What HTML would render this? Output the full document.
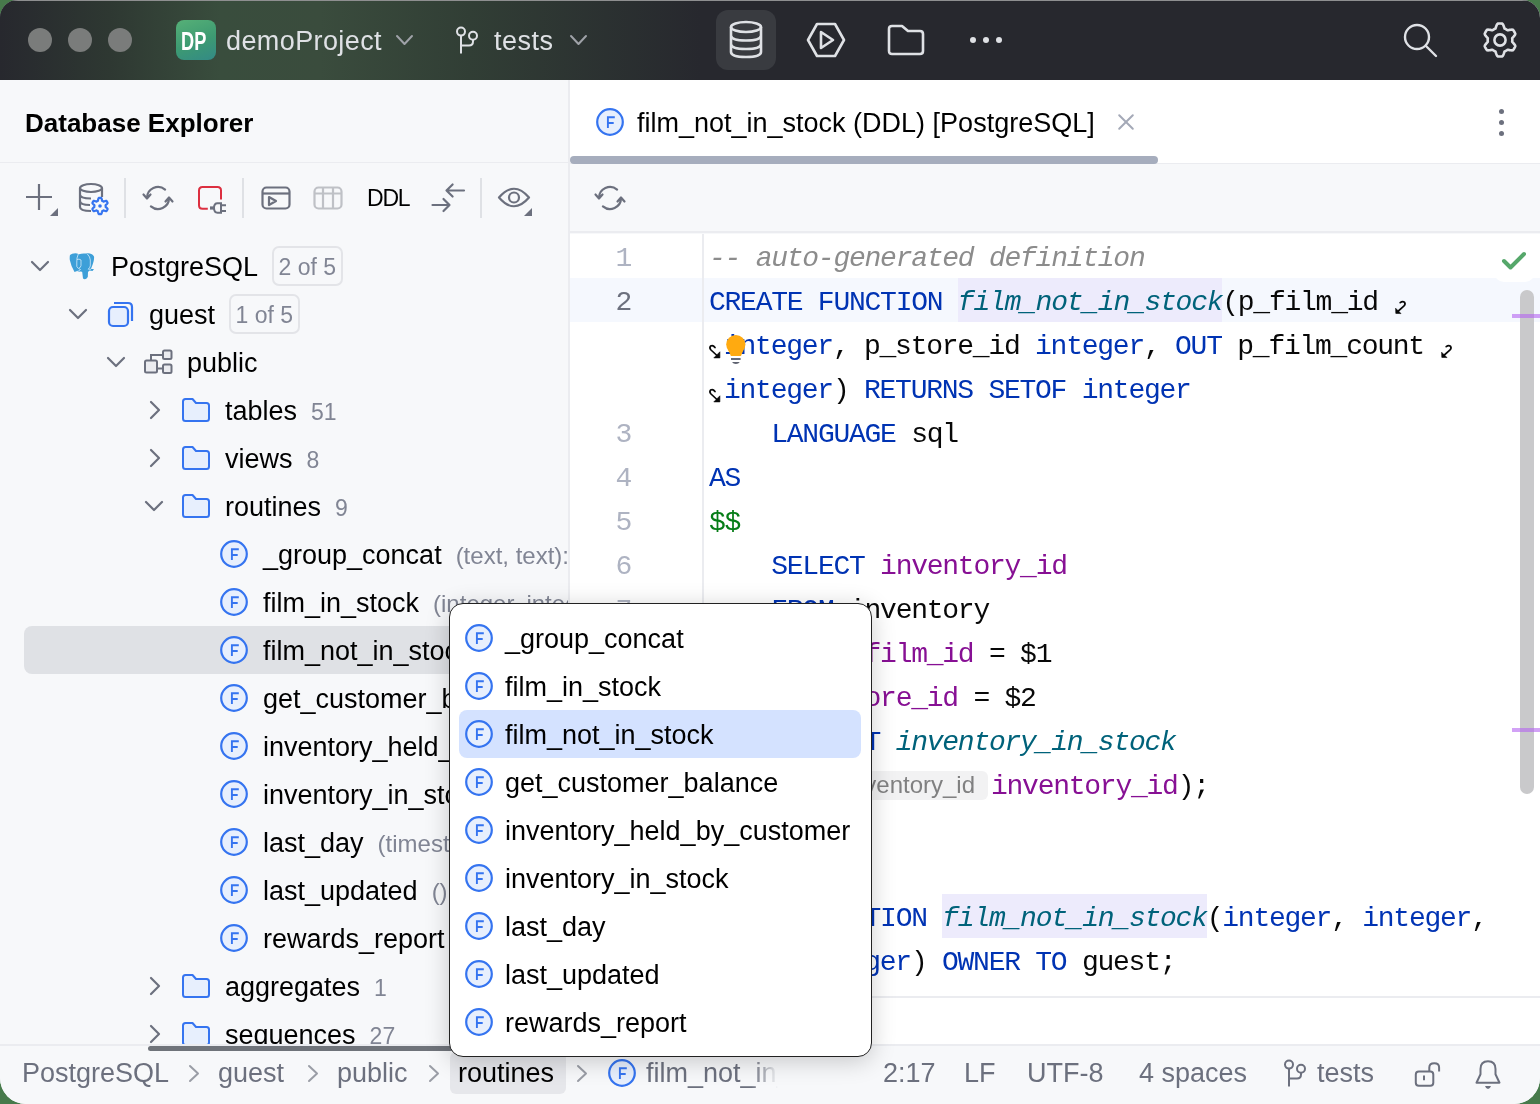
<!DOCTYPE html>
<html><head><meta charset="utf-8">
<style>
*{margin:0;padding:0;box-sizing:border-box}
html,body{width:1540px;height:1104px;overflow:hidden;background:#477a4b}
body{position:relative;font-family:"Liberation Sans",sans-serif;color:#000}
.win{will-change:transform;position:absolute;left:0;top:0;width:1540px;height:1104px;border-radius:18px 18px 26px 26px;overflow:hidden;background:#f7f8fa}
.t{position:absolute;white-space:pre}
svg{position:absolute;overflow:visible}
.cl{position:absolute;left:709px;font-family:"Liberation Mono",monospace;font-size:28px;letter-spacing:-1.25px;white-space:pre;line-height:44px;height:44px;color:#080808}
.kw{color:#0033b3}.fn{color:#00627a;font-style:italic}.id{color:#871094}.cm{color:#8c8c8c;font-style:italic}.gr{color:#067d17}
.hl{background:#ede9fa}
</style></head>
<body>
<div class="win">

<div style="position:absolute;left:0;top:0;width:1540px;height:80px;background:#27282e"></div>
<div style="position:absolute;left:0;top:0;width:760px;height:80px;background:linear-gradient(90deg,#27282e 0px,#2e3832 110px,#394d3d 220px,#3a4c3d 320px,#313e35 470px,#27282e 700px)"></div>
<div style="position:absolute;left:0;top:0;width:1540px;height:1px;background:#8e8f90"></div>
<div style="position:absolute;left:28px;top:28px;width:24px;height:24px;border-radius:50%;background:#7a7c7b"></div>
<div style="position:absolute;left:68px;top:28px;width:24px;height:24px;border-radius:50%;background:#7a7c7b"></div>
<div style="position:absolute;left:108px;top:28px;width:24px;height:24px;border-radius:50%;background:#7a7c7b"></div>
<div style="position:absolute;left:176px;top:20px;width:40px;height:40px;border-radius:8px;background:linear-gradient(160deg,#56b077 0%,#3d9a72 55%,#338a86 100%)"></div>
<div class="t" style="left:180.5px;top:25.9px;font-size:26px;line-height:31px;height:31px;color:#fff;font-weight:bold;transform:scaleX(0.7);transform-origin:0 0;">DP</div>
<div class="t" style="left:226px;top:25.1px;font-size:27px;line-height:32px;height:32px;color:#dfe1e5;font-weight:normal;letter-spacing:0.4px;">demoProject</div>
<svg style="left:394.5px;top:34.0px;" width="19" height="12" viewBox="0 0 19 12"><path d="M2 2 L9.5 10 L17 2" fill="none" stroke="#9fa2a8" stroke-width="2" stroke-linecap="round" stroke-linejoin="round"/></svg>
<svg style="left:454px;top:26px;" width="26" height="30" viewBox="0 0 26 30"><g fill="none" stroke="#dfe1e5" stroke-width="2"><circle cx="7" cy="5.6" r="4"/><circle cx="19" cy="9.8" r="4"/><path d="M7 9.6 L7 27.5 M19 13.8 L19 15.5 Q19 19.5 15 19.5 L7 19.5"/></g></svg>
<div class="t" style="left:494px;top:25.1px;font-size:27px;line-height:32px;height:32px;color:#dfe1e5;font-weight:normal;letter-spacing:0.5px;">tests</div>
<svg style="left:568.5px;top:34.0px;" width="19" height="12" viewBox="0 0 19 12"><path d="M2 2 L9.5 10 L17 2" fill="none" stroke="#9fa2a8" stroke-width="2" stroke-linecap="round" stroke-linejoin="round"/></svg>
<div style="position:absolute;left:716px;top:10px;width:60px;height:60px;border-radius:12px;background:#393b40"></div>
<svg style="left:729px;top:21px;" width="34" height="38" viewBox="0 0 34 38"><g fill="none" stroke="#dfe1e5" stroke-width="2.6"><ellipse cx="17" cy="6" rx="15" ry="5"/><path d="M2 6 L2 31 Q2 36 17 36 Q32 36 32 31 L32 6 M2 14.5 Q2 19.5 17 19.5 Q32 19.5 32 14.5 M2 23 Q2 28 17 28 Q32 28 32 23"/></g></svg>
<svg style="left:806px;top:22px;" width="40" height="36" viewBox="0 0 40 36"><g fill="none" stroke="#dfe1e5" stroke-width="2.6" stroke-linejoin="round"><path d="M11 2 L29 2 L38 18 L29 34 L11 34 L2 18 Z"/><path d="M15 10 L27 18 L15 26 Z"/></g></svg>
<svg style="left:887px;top:24px;" width="38" height="32" viewBox="0 0 38 32"><path d="M2 5 Q2 2 5 2 L15 2 L21 7 L33 7 Q36 7 36 10 L36 27 Q36 30 33 30 L5 30 Q2 30 2 27 Z" fill="none" stroke="#dfe1e5" stroke-width="2.6" stroke-linejoin="round"/></svg>
<div style="position:absolute;left:970px;top:37px;width:6px;height:6px;border-radius:50%;background:#dfe1e5"></div>
<div style="position:absolute;left:983px;top:37px;width:6px;height:6px;border-radius:50%;background:#dfe1e5"></div>
<div style="position:absolute;left:996px;top:37px;width:6px;height:6px;border-radius:50%;background:#dfe1e5"></div>
<svg style="left:1402px;top:22px;" width="38" height="38" viewBox="0 0 38 38"><g fill="none" stroke="#dfe1e5" stroke-width="2.4" stroke-linecap="round"><circle cx="15" cy="15" r="12"/><path d="M24 24 L34 34"/></g></svg>
<svg style="left:1481px;top:21px;" width="38" height="38" viewBox="0 0 38 38"><g fill="none" stroke="#dfe1e5" stroke-width="2.6" stroke-linejoin="round"><path d="M19.00 2.50 L19.58 2.51 L20.15 2.54 L20.72 2.59 L21.30 2.66 L21.79 3.16 L22.21 3.90 L22.57 4.69 L22.87 5.50 L23.13 6.29 L23.35 7.05 L23.61 7.60 L24.00 7.76 L24.39 7.94 L24.77 8.14 L25.15 8.35 L25.52 8.57 L25.88 8.80 L26.23 9.05 L26.57 9.31 L27.18 9.26 L27.94 9.07 L28.76 8.89 L29.61 8.75 L30.47 8.67 L31.32 8.66 L32.00 8.84 L32.35 9.30 L32.68 9.77 L32.99 10.26 L33.29 10.75 L33.57 11.25 L33.83 11.77 L34.07 12.29 L34.30 12.82 L34.11 13.50 L33.68 14.23 L33.18 14.93 L32.63 15.60 L32.07 16.22 L31.53 16.79 L31.18 17.29 L31.23 17.71 L31.27 18.14 L31.29 18.57 L31.30 19.00 L31.29 19.43 L31.27 19.86 L31.23 20.29 L31.18 20.71 L31.53 21.21 L32.07 21.78 L32.63 22.40 L33.18 23.07 L33.68 23.77 L34.11 24.50 L34.30 25.18 L34.07 25.71 L33.83 26.23 L33.57 26.75 L33.29 27.25 L32.99 27.74 L32.68 28.23 L32.35 28.70 L32.00 29.16 L31.32 29.34 L30.47 29.33 L29.61 29.25 L28.76 29.11 L27.94 28.93 L27.18 28.74 L26.57 28.69 L26.23 28.95 L25.88 29.20 L25.52 29.43 L25.15 29.65 L24.77 29.86 L24.39 30.06 L24.00 30.24 L23.61 30.40 L23.35 30.95 L23.13 31.71 L22.87 32.50 L22.57 33.31 L22.21 34.10 L21.79 34.84 L21.30 35.34 L20.72 35.41 L20.15 35.46 L19.58 35.49 L19.00 35.50 L18.42 35.49 L17.85 35.46 L17.28 35.41 L16.70 35.34 L16.21 34.84 L15.79 34.10 L15.43 33.31 L15.13 32.50 L14.87 31.71 L14.65 30.95 L14.39 30.40 L14.00 30.24 L13.61 30.06 L13.23 29.86 L12.85 29.65 L12.48 29.43 L12.12 29.20 L11.77 28.95 L11.43 28.69 L10.82 28.74 L10.06 28.93 L9.24 29.11 L8.39 29.25 L7.53 29.33 L6.68 29.34 L6.00 29.16 L5.65 28.70 L5.32 28.23 L5.01 27.74 L4.71 27.25 L4.43 26.75 L4.17 26.23 L3.93 25.71 L3.70 25.18 L3.89 24.50 L4.32 23.77 L4.82 23.07 L5.37 22.40 L5.93 21.78 L6.47 21.21 L6.82 20.71 L6.77 20.29 L6.73 19.86 L6.71 19.43 L6.70 19.00 L6.71 18.57 L6.73 18.14 L6.77 17.71 L6.82 17.29 L6.47 16.79 L5.93 16.22 L5.37 15.60 L4.82 14.93 L4.32 14.23 L3.89 13.50 L3.70 12.82 L3.93 12.29 L4.17 11.77 L4.43 11.25 L4.71 10.75 L5.01 10.26 L5.32 9.77 L5.65 9.30 L6.00 8.84 L6.68 8.66 L7.53 8.67 L8.39 8.75 L9.24 8.89 L10.06 9.07 L10.82 9.26 L11.43 9.31 L11.77 9.05 L12.12 8.80 L12.48 8.57 L12.85 8.35 L13.23 8.14 L13.61 7.94 L14.00 7.76 L14.39 7.60 L14.65 7.05 L14.87 6.29 L15.13 5.50 L15.43 4.69 L15.79 3.90 L16.21 3.16 L16.70 2.66 L17.28 2.59 L17.85 2.54 L18.42 2.51 Z"/><circle cx="19" cy="19" r="5.6"/></g></svg>
<div class="t" style="left:25px;top:107.9px;font-size:26px;line-height:31px;height:31px;color:#000;font-weight:bold;">Database Explorer</div>
<div style="position:absolute;left:0;top:162px;width:570px;height:1px;background:#ebecf0"></div>
<svg style="left:24px;top:182px;" width="36" height="36" viewBox="0 0 36 36"><g stroke="#6c707e" stroke-width="2.2" fill="none"><path d="M15 2 L15 28 M2 15 L28 15"/></g><path d="M34 26 L34 34 L26 34 Z" fill="#6c707e"/></svg>
<svg style="left:78px;top:182px;" width="30" height="32" viewBox="0 0 30 32"><g fill="none" stroke="#6c707e" stroke-width="2.2"><ellipse cx="13" cy="6" rx="11" ry="4"/><path d="M2 6 L2 25 Q2 29 13 29 M24 6 L24 15 M2 12.5 Q2 16.5 13 16.5 M2 19 Q2 23 12 23"/></g></svg>
<svg style="left:0;top:0" width="1" height="1" viewBox="0 0 1 1"><path d="M100.00 197.80 L100.29 197.80 L100.57 197.82 L100.86 197.84 L101.14 197.88 L101.38 198.18 L101.57 198.62 L101.72 199.09 L101.84 199.58 L101.93 200.05 L102.00 200.49 L102.10 200.81 L102.28 200.88 L102.45 200.97 L102.63 201.06 L102.80 201.15 L102.97 201.25 L103.13 201.36 L103.29 201.47 L103.45 201.59 L103.77 201.51 L104.19 201.35 L104.64 201.19 L105.12 201.06 L105.61 200.95 L106.08 200.90 L106.46 200.95 L106.63 201.18 L106.80 201.41 L106.95 201.65 L107.10 201.90 L107.24 202.15 L107.37 202.41 L107.49 202.66 L107.60 202.93 L107.46 203.28 L107.17 203.67 L106.84 204.04 L106.48 204.38 L106.12 204.70 L105.77 204.98 L105.55 205.22 L105.57 205.41 L105.59 205.61 L105.60 205.80 L105.60 206.00 L105.60 206.20 L105.59 206.39 L105.57 206.59 L105.55 206.78 L105.77 207.02 L106.12 207.30 L106.48 207.62 L106.84 207.96 L107.17 208.33 L107.46 208.72 L107.60 209.07 L107.49 209.34 L107.37 209.59 L107.24 209.85 L107.10 210.10 L106.95 210.35 L106.80 210.59 L106.63 210.82 L106.46 211.05 L106.08 211.10 L105.61 211.05 L105.12 210.94 L104.64 210.81 L104.19 210.65 L103.77 210.49 L103.45 210.41 L103.29 210.53 L103.13 210.64 L102.97 210.75 L102.80 210.85 L102.63 210.94 L102.45 211.03 L102.28 211.12 L102.10 211.19 L102.00 211.51 L101.93 211.95 L101.84 212.42 L101.72 212.91 L101.57 213.38 L101.38 213.82 L101.14 214.12 L100.86 214.16 L100.57 214.18 L100.29 214.20 L100.00 214.20 L99.71 214.20 L99.43 214.18 L99.14 214.16 L98.86 214.12 L98.62 213.82 L98.43 213.38 L98.28 212.91 L98.16 212.42 L98.07 211.95 L98.00 211.51 L97.90 211.19 L97.72 211.12 L97.55 211.03 L97.37 210.94 L97.20 210.85 L97.03 210.75 L96.87 210.64 L96.71 210.53 L96.55 210.41 L96.23 210.49 L95.81 210.65 L95.36 210.81 L94.88 210.94 L94.39 211.05 L93.92 211.10 L93.54 211.05 L93.37 210.82 L93.20 210.59 L93.05 210.35 L92.90 210.10 L92.76 209.85 L92.63 209.59 L92.51 209.34 L92.40 209.07 L92.54 208.72 L92.83 208.33 L93.16 207.96 L93.52 207.62 L93.88 207.30 L94.23 207.02 L94.45 206.78 L94.43 206.59 L94.41 206.39 L94.40 206.20 L94.40 206.00 L94.40 205.80 L94.41 205.61 L94.43 205.41 L94.45 205.22 L94.23 204.98 L93.88 204.70 L93.52 204.38 L93.16 204.04 L92.83 203.67 L92.54 203.28 L92.40 202.93 L92.51 202.66 L92.63 202.41 L92.76 202.15 L92.90 201.90 L93.05 201.65 L93.20 201.41 L93.37 201.18 L93.54 200.95 L93.92 200.90 L94.39 200.95 L94.88 201.06 L95.36 201.19 L95.81 201.35 L96.23 201.51 L96.55 201.59 L96.71 201.47 L96.87 201.36 L97.03 201.25 L97.20 201.15 L97.37 201.06 L97.55 200.97 L97.72 200.88 L97.90 200.81 L98.00 200.49 L98.07 200.05 L98.16 199.58 L98.28 199.09 L98.43 198.62 L98.62 198.18 L98.86 197.88 L99.14 197.84 L99.43 197.82 L99.71 197.80 Z" fill="#f7f8fa" stroke="#3574f0" stroke-width="2.2" stroke-linejoin="round"/><circle cx="100" cy="206" r="1.8" fill="#3574f0"/></svg>
<div style="position:absolute;left:124px;top:178px;width:2px;height:40px;background:#dfe1e5"></div>
<div style="position:absolute;left:242px;top:178px;width:2px;height:40px;background:#dfe1e5"></div>
<div style="position:absolute;left:480px;top:178px;width:2px;height:40px;background:#dfe1e5"></div>
<svg style="left:142px;top:183px;" width="32" height="30" viewBox="0 0 32 30"><g fill="none" stroke="#6c707e" stroke-width="2.2" stroke-linecap="round" stroke-linejoin="round"><path d="M23.1 6.6 A11 11 0 0 0 5 15 M1.5 11.5 L5 15.5 L8.5 11.5"/><path d="M8.9 23.4 A11 11 0 0 0 27 15 M23.5 18.5 L27 14.5 L30.5 18.5"/></g></svg>
<svg style="left:197px;top:185px;" width="32" height="32" viewBox="0 0 32 32"><path d="M10.8 23.8 L5.5 23.8 Q2 23.8 2 20.3 L2 5.5 Q2 2 5.5 2 L20.5 2 Q24 2 24 5.5 L24 14.6" fill="none" stroke="#dc2f40" stroke-width="2"/><g fill="none" stroke="#6c707e" stroke-width="2"><path d="M24 18.3 L20.5 18.3 Q17 18.3 17 23 Q17 27.7 20.5 27.7 L24 27.7 Z"/><path d="M24 20.2 L29 20.2 M24 26 L29 26"/></g><rect x="13" y="21.4" width="4" height="3.2" fill="#6c707e"/></svg>
<svg style="left:261px;top:186px;" width="30" height="24" viewBox="0 0 30 24"><g fill="none" stroke="#6c707e" stroke-width="2.2"><rect x="1.5" y="1.5" width="27" height="21" rx="4"/><path d="M1.5 7.5 L28.5 7.5"/><path d="M8 11 L15 15 L8 19 Z" stroke-linejoin="round"/></g></svg>
<svg style="left:313px;top:186px;" width="30" height="24" viewBox="0 0 30 24"><g fill="none" stroke="#bfc1c6" stroke-width="2.2"><rect x="1.5" y="1.5" width="27" height="21" rx="4"/><path d="M1.5 7.5 L28.5 7.5 M10 1.5 L10 22.5 M20 1.5 L20 22.5"/></g></svg>
<div class="t" style="left:367px;top:184.4px;font-size:23px;line-height:28px;height:28px;color:#000;font-weight:normal;letter-spacing:-1.2px;">DDL</div>
<svg style="left:431px;top:183px;" width="36" height="30" viewBox="0 0 36 30"><g fill="none" stroke="#6c707e" stroke-width="2.2" stroke-linecap="round" stroke-linejoin="round"><path d="M33 7.5 L15.5 7.5 M21.6 1.5 L15.5 7.5 L21.6 13.5"/><path d="M1.5 22 L18.5 22 M12.5 16 L18.5 22 L12.5 28"/></g></svg>
<svg style="left:497px;top:186px;" width="40" height="32" viewBox="0 0 40 32"><g fill="none" stroke="#6c707e" stroke-width="2.2"><path d="M2 11.5 Q17 -6 32 11.5 Q17 29 2 11.5 Z" stroke-linejoin="round"/><circle cx="17" cy="11.5" r="5"/></g><path d="M35 22 L35 30 L27 30 Z" fill="#6c707e"/></svg>
<div style="position:absolute;left:0;top:0;width:568px;height:1044px;overflow:hidden">
<div style="position:absolute;left:24px;top:626px;width:560px;height:48px;border-radius:8px;background:#dfe1e5"></div>
<svg style="left:30.0px;top:260.0px;" width="20" height="12" viewBox="0 0 20 12"><path d="M2 2 L10.0 10 L18 2" fill="none" stroke="#6c707e" stroke-width="2.2" stroke-linecap="round" stroke-linejoin="round"/></svg>
<svg style="left:66px;top:250px;" width="32" height="32" viewBox="0 0 32 32"><path d="M4 5 Q6 3 11 3.4 L13 4.2 Q16 3.2 20 3.6 L21.5 3.2 Q26 3 28 6.5 Q28.6 10 25.5 17.5 L25 19 L28 19 L26.5 21 L23.5 20.5 L22 22 L21.8 27 Q19.5 30.5 17 28.5 L16.2 22 L15 21.5 L11.5 21.8 L12.5 20.5 L8.5 22 Q5 16 3.8 10 Q3.5 7 4 5 Z" fill="#3d9fd8"/><g fill="none" stroke="#d6ebf9" stroke-width="0.8"><path d="M12.3 4 Q10.5 8 10.8 12 L10.8 16.5 Q12 18.8 14.5 19.5 L12 21.5 M21.2 3.8 Q24.3 7 24.3 10 L24.3 16 Q23.6 18 22.2 19.2 L25 19.3 M11 9.5 Q13 8.5 15 10 L15 15.5 Q14.5 18 13 18"/></g></svg>
<div class="t" style="left:111px;top:251.1px;font-size:27px;line-height:32px;height:32px;color:#000;font-weight:normal;">PostgreSQL</div>
<div style="position:absolute;left:272.1px;top:246px;width:70.6px;height:40px;border:2px solid #e3e4e8;border-radius:7px"></div>
<div class="t" style="left:278.578125px;top:253.4px;font-size:23px;line-height:28px;height:28px;color:#818594;font-weight:normal;">2 of 5</div>
<svg style="left:68.0px;top:308.0px;" width="20" height="12" viewBox="0 0 20 12"><path d="M2 2 L10.0 10 L18 2" fill="none" stroke="#6c707e" stroke-width="2.2" stroke-linecap="round" stroke-linejoin="round"/></svg>
<svg style="left:106px;top:300px;" width="30" height="30" viewBox="0 0 30 30"><path d="M8 3 L22 3 Q26 3 26 7 L26 21" fill="none" stroke="#3574f0" stroke-width="2.2"/><rect x="3" y="7" width="19" height="19" rx="4" fill="#e7effd" stroke="#3574f0" stroke-width="2.2"/></svg>
<div class="t" style="left:149px;top:299.1px;font-size:27px;line-height:32px;height:32px;color:#000;font-weight:normal;">guest</div>
<div style="position:absolute;left:229.0px;top:294px;width:70.6px;height:40px;border:2px solid #e3e4e8;border-radius:7px"></div>
<div class="t" style="left:235.546875px;top:301.4px;font-size:23px;line-height:28px;height:28px;color:#818594;font-weight:normal;">1 of 5</div>
<svg style="left:106.0px;top:356.0px;" width="20" height="12" viewBox="0 0 20 12"><path d="M2 2 L10.0 10 L18 2" fill="none" stroke="#6c707e" stroke-width="2.2" stroke-linecap="round" stroke-linejoin="round"/></svg>
<svg style="left:142px;top:348px;" width="32" height="28" viewBox="0 0 32 28"><g stroke="#6c707e" stroke-width="2" fill="#ebecf0"><path d="M9 12 L9 7 L21 7 M15 20.5 L21 20.5" fill="none"/><rect x="3" y="12.5" width="12" height="12" rx="1.5"/><rect x="21" y="2.5" width="8.5" height="8.5" rx="1.5"/><rect x="21" y="16.5" width="8.5" height="8.5" rx="1.5"/></g></svg>
<div class="t" style="left:187px;top:347.1px;font-size:27px;line-height:32px;height:32px;color:#000;font-weight:normal;">public</div>
<svg style="left:148.5px;top:400.0px;" width="12" height="20" viewBox="0 0 12 20"><path d="M2 2 L10 10.0 L2 18" fill="none" stroke="#6c707e" stroke-width="2.2" stroke-linecap="round" stroke-linejoin="round"/></svg>
<svg style="left:182px;top:398px;" width="28" height="24" viewBox="0 0 28 24"><path d="M1 3.5 Q1 1 3.5 1 L10.5 1 L14 5 L24.5 5 Q27 5 27 7.5 L27 20.5 Q27 23 24.5 23 L3.5 23 Q1 23 1 20.5 Z" fill="#e7effd" stroke="#3574f0" stroke-width="2" stroke-linejoin="round"/></svg>
<div class="t" style="left:225px;top:395.1px;font-size:27px;line-height:32px;height:32px;color:#000;font-weight:normal;">tables</div>
<div class="t" style="left:311.046875px;top:398.4px;font-size:23px;line-height:28px;height:28px;color:#818594;font-weight:normal;">51</div>
<svg style="left:148.5px;top:448.0px;" width="12" height="20" viewBox="0 0 12 20"><path d="M2 2 L10 10.0 L2 18" fill="none" stroke="#6c707e" stroke-width="2.2" stroke-linecap="round" stroke-linejoin="round"/></svg>
<svg style="left:182px;top:446px;" width="28" height="24" viewBox="0 0 28 24"><path d="M1 3.5 Q1 1 3.5 1 L10.5 1 L14 5 L24.5 5 Q27 5 27 7.5 L27 20.5 Q27 23 24.5 23 L3.5 23 Q1 23 1 20.5 Z" fill="#e7effd" stroke="#3574f0" stroke-width="2" stroke-linejoin="round"/></svg>
<div class="t" style="left:225px;top:443.1px;font-size:27px;line-height:32px;height:32px;color:#000;font-weight:normal;">views</div>
<div class="t" style="left:306.515625px;top:446.4px;font-size:23px;line-height:28px;height:28px;color:#818594;font-weight:normal;">8</div>
<svg style="left:144.0px;top:500.0px;" width="20" height="12" viewBox="0 0 20 12"><path d="M2 2 L10.0 10 L18 2" fill="none" stroke="#6c707e" stroke-width="2.2" stroke-linecap="round" stroke-linejoin="round"/></svg>
<svg style="left:182px;top:494px;" width="28" height="24" viewBox="0 0 28 24"><path d="M1 3.5 Q1 1 3.5 1 L10.5 1 L14 5 L24.5 5 Q27 5 27 7.5 L27 20.5 Q27 23 24.5 23 L3.5 23 Q1 23 1 20.5 Z" fill="#e7effd" stroke="#3574f0" stroke-width="2" stroke-linejoin="round"/></svg>
<div class="t" style="left:225px;top:491.1px;font-size:27px;line-height:32px;height:32px;color:#000;font-weight:normal;">routines</div>
<div class="t" style="left:335.046875px;top:494.4px;font-size:23px;line-height:28px;height:28px;color:#818594;font-weight:normal;">9</div>
<svg style="left:220px;top:540px;" width="28" height="28" viewBox="0 0 28 28"><circle cx="14" cy="14" r="12.8" fill="#e7effd" stroke="#3574f0" stroke-width="2.2"/><path d="M11.9 20 L11.9 9.2 L18.8 9.2 M11.9 15 L17.7 15" fill="none" stroke="#3574f0" stroke-width="1.9"/></svg>
<div class="t" style="left:263px;top:539.1px;font-size:27px;line-height:32px;height:32px;color:#000;font-weight:normal;">_group_concat</div>
<div class="t" style="left:455.625px;top:540.6px;font-size:24px;line-height:29px;height:29px;color:#818594;font-weight:normal;">(text, text): text</div>
<svg style="left:220px;top:588px;" width="28" height="28" viewBox="0 0 28 28"><circle cx="14" cy="14" r="12.8" fill="#e7effd" stroke="#3574f0" stroke-width="2.2"/><path d="M11.9 20 L11.9 9.2 L18.8 9.2 M11.9 15 L17.7 15" fill="none" stroke="#3574f0" stroke-width="1.9"/></svg>
<div class="t" style="left:263px;top:587.1px;font-size:27px;line-height:32px;height:32px;color:#000;font-weight:normal;">film_in_stock</div>
<div class="t" style="left:433.046875px;top:588.6px;font-size:24px;line-height:29px;height:29px;color:#818594;font-weight:normal;">(integer, integer): integer</div>
<svg style="left:220px;top:636px;" width="28" height="28" viewBox="0 0 28 28"><circle cx="14" cy="14" r="12.8" fill="#e7effd" stroke="#3574f0" stroke-width="2.2"/><path d="M11.9 20 L11.9 9.2 L18.8 9.2 M11.9 15 L17.7 15" fill="none" stroke="#3574f0" stroke-width="1.9"/></svg>
<div class="t" style="left:263px;top:635.1px;font-size:27px;line-height:32px;height:32px;color:#000;font-weight:normal;">film_not_in_stock</div>
<div class="t" style="left:485.59375px;top:636.6px;font-size:24px;line-height:29px;height:29px;color:#818594;font-weight:normal;">(integer, integer): integer</div>
<svg style="left:220px;top:684px;" width="28" height="28" viewBox="0 0 28 28"><circle cx="14" cy="14" r="12.8" fill="#e7effd" stroke="#3574f0" stroke-width="2.2"/><path d="M11.9 20 L11.9 9.2 L18.8 9.2 M11.9 15 L17.7 15" fill="none" stroke="#3574f0" stroke-width="1.9"/></svg>
<div class="t" style="left:263px;top:683.1px;font-size:27px;line-height:32px;height:32px;color:#000;font-weight:normal;">get_customer_balance</div>
<div class="t" style="left:550.15625px;top:684.6px;font-size:24px;line-height:29px;height:29px;color:#818594;font-weight:normal;">(integer, timestamp): numeric</div>
<svg style="left:220px;top:732px;" width="28" height="28" viewBox="0 0 28 28"><circle cx="14" cy="14" r="12.8" fill="#e7effd" stroke="#3574f0" stroke-width="2.2"/><path d="M11.9 20 L11.9 9.2 L18.8 9.2 M11.9 15 L17.7 15" fill="none" stroke="#3574f0" stroke-width="1.9"/></svg>
<div class="t" style="left:263px;top:731.1px;font-size:27px;line-height:32px;height:32px;color:#000;font-weight:normal;">inventory_held_by_customer</div>
<div class="t" style="left:622.171875px;top:732.6px;font-size:24px;line-height:29px;height:29px;color:#818594;font-weight:normal;">(integer): integer</div>
<svg style="left:220px;top:780px;" width="28" height="28" viewBox="0 0 28 28"><circle cx="14" cy="14" r="12.8" fill="#e7effd" stroke="#3574f0" stroke-width="2.2"/><path d="M11.9 20 L11.9 9.2 L18.8 9.2 M11.9 15 L17.7 15" fill="none" stroke="#3574f0" stroke-width="1.9"/></svg>
<div class="t" style="left:263px;top:779.1px;font-size:27px;line-height:32px;height:32px;color:#000;font-weight:normal;">inventory_in_stock</div>
<div class="t" style="left:500.609375px;top:780.6px;font-size:24px;line-height:29px;height:29px;color:#818594;font-weight:normal;">(integer): boolean</div>
<svg style="left:220px;top:828px;" width="28" height="28" viewBox="0 0 28 28"><circle cx="14" cy="14" r="12.8" fill="#e7effd" stroke="#3574f0" stroke-width="2.2"/><path d="M11.9 20 L11.9 9.2 L18.8 9.2 M11.9 15 L17.7 15" fill="none" stroke="#3574f0" stroke-width="1.9"/></svg>
<div class="t" style="left:263px;top:827.1px;font-size:27px;line-height:32px;height:32px;color:#000;font-weight:normal;">last_day</div>
<div class="t" style="left:377.5625px;top:828.6px;font-size:24px;line-height:29px;height:29px;color:#818594;font-weight:normal;">(timestamp): date</div>
<svg style="left:220px;top:876px;" width="28" height="28" viewBox="0 0 28 28"><circle cx="14" cy="14" r="12.8" fill="#e7effd" stroke="#3574f0" stroke-width="2.2"/><path d="M11.9 20 L11.9 9.2 L18.8 9.2 M11.9 15 L17.7 15" fill="none" stroke="#3574f0" stroke-width="1.9"/></svg>
<div class="t" style="left:263px;top:875.1px;font-size:27px;line-height:32px;height:32px;color:#000;font-weight:normal;">last_updated</div>
<div class="t" style="left:431.625px;top:876.6px;font-size:24px;line-height:29px;height:29px;color:#818594;font-weight:normal;">(): trigger</div>
<svg style="left:220px;top:924px;" width="28" height="28" viewBox="0 0 28 28"><circle cx="14" cy="14" r="12.8" fill="#e7effd" stroke="#3574f0" stroke-width="2.2"/><path d="M11.9 20 L11.9 9.2 L18.8 9.2 M11.9 15 L17.7 15" fill="none" stroke="#3574f0" stroke-width="1.9"/></svg>
<div class="t" style="left:263px;top:923.1px;font-size:27px;line-height:32px;height:32px;color:#000;font-weight:normal;">rewards_report</div>
<div class="t" style="left:458.546875px;top:924.6px;font-size:24px;line-height:29px;height:29px;color:#818594;font-weight:normal;">(integer, numeric): customer</div>
<svg style="left:148.5px;top:976.0px;" width="12" height="20" viewBox="0 0 12 20"><path d="M2 2 L10 10.0 L2 18" fill="none" stroke="#6c707e" stroke-width="2.2" stroke-linecap="round" stroke-linejoin="round"/></svg>
<svg style="left:182px;top:974px;" width="28" height="24" viewBox="0 0 28 24"><path d="M1 3.5 Q1 1 3.5 1 L10.5 1 L14 5 L24.5 5 Q27 5 27 7.5 L27 20.5 Q27 23 24.5 23 L3.5 23 Q1 23 1 20.5 Z" fill="#e7effd" stroke="#3574f0" stroke-width="2" stroke-linejoin="round"/></svg>
<div class="t" style="left:225px;top:971.1px;font-size:27px;line-height:32px;height:32px;color:#000;font-weight:normal;">aggregates</div>
<div class="t" style="left:374.09375px;top:974.4px;font-size:23px;line-height:28px;height:28px;color:#818594;font-weight:normal;">1</div>
<svg style="left:148.5px;top:1024.0px;" width="12" height="20" viewBox="0 0 12 20"><path d="M2 2 L10 10.0 L2 18" fill="none" stroke="#6c707e" stroke-width="2.2" stroke-linecap="round" stroke-linejoin="round"/></svg>
<svg style="left:182px;top:1022px;" width="28" height="24" viewBox="0 0 28 24"><path d="M1 3.5 Q1 1 3.5 1 L10.5 1 L14 5 L24.5 5 Q27 5 27 7.5 L27 20.5 Q27 23 24.5 23 L3.5 23 Q1 23 1 20.5 Z" fill="#e7effd" stroke="#3574f0" stroke-width="2" stroke-linejoin="round"/></svg>
<div class="t" style="left:225px;top:1019.1px;font-size:27px;line-height:32px;height:32px;color:#000;font-weight:normal;">sequences</div>
<div class="t" style="left:369.59375px;top:1022.4px;font-size:23px;line-height:28px;height:28px;color:#818594;font-weight:normal;">27</div>
</div>
<div style="position:absolute;left:568px;top:80px;width:2px;height:965px;background:#ebecf0"></div>
<div style="position:absolute;left:570px;top:80px;width:970px;height:83px;background:#fff"></div>
<div style="position:absolute;left:570px;top:163px;width:970px;height:70px;background:#f7f8fa;border-top:1px solid #ebecf0;border-bottom:2px solid #ebecf0"></div>
<div style="position:absolute;left:570px;top:156px;width:588px;height:8px;border-radius:4px;background:#a6adbd"></div>
<svg style="left:596px;top:108px;" width="28" height="28" viewBox="0 0 28 28"><circle cx="14" cy="14" r="12.8" fill="#e7effd" stroke="#3574f0" stroke-width="2.2"/><path d="M11.9 20 L11.9 9.2 L18.8 9.2 M11.9 15 L17.7 15" fill="none" stroke="#3574f0" stroke-width="1.9"/></svg>
<div class="t" style="left:637px;top:107.1px;font-size:27px;line-height:32px;height:32px;color:#000;font-weight:normal;">film_not_in_stock (DDL) [PostgreSQL]</div>
<svg style="left:1116px;top:112px;" width="20" height="20" viewBox="0 0 20 20"><path d="M3.2 3.2 L16.8 16.8 M16.8 3.2 L3.2 16.8" stroke="#a4a9b7" stroke-width="2" stroke-linecap="round"/></svg>
<div style="position:absolute;left:1499px;top:108.5px;width:5px;height:5px;border-radius:50%;background:#6c707e"></div>
<div style="position:absolute;left:1499px;top:119.5px;width:5px;height:5px;border-radius:50%;background:#6c707e"></div>
<div style="position:absolute;left:1499px;top:130.5px;width:5px;height:5px;border-radius:50%;background:#6c707e"></div>
<svg style="left:594px;top:183px;" width="32" height="30" viewBox="0 0 32 30"><g fill="none" stroke="#6c707e" stroke-width="2.2" stroke-linecap="round" stroke-linejoin="round"><path d="M23.1 6.6 A11 11 0 0 0 5 15 M1.5 11.5 L5 15.5 L8.5 11.5"/><path d="M8.9 23.4 A11 11 0 0 0 27 15 M23.5 18.5 L27 14.5 L30.5 18.5"/></g></svg>
<div style="position:absolute;left:570px;top:234px;width:970px;height:810px;background:#fff"></div>
<div style="position:absolute;left:570px;top:278px;width:970px;height:44px;background:#f5f8fe"></div>
<div style="position:absolute;left:702px;top:234px;width:2px;height:763px;background:#ebecf0"></div>
<div style="position:absolute;left:570px;top:996px;width:970px;height:2px;background:#ebecf0"></div>
<div style="position:absolute;left:957.8px;top:278px;width:264.4px;height:44px;background:#edebfc"></div>
<div style="position:absolute;left:942.2px;top:894px;width:264.4px;height:44px;background:#edebfc"></div>
<div class="cl" style="left:615.5px;top:237px;color:#aeb3c2">1</div>
<div class="cl" style="left:615.5px;top:281px;color:#6c707e">2</div>
<div class="cl" style="left:615.5px;top:413px;color:#aeb3c2">3</div>
<div class="cl" style="left:615.5px;top:457px;color:#aeb3c2">4</div>
<div class="cl" style="left:615.5px;top:501px;color:#aeb3c2">5</div>
<div class="cl" style="left:615.5px;top:545px;color:#aeb3c2">6</div>
<div class="cl" style="left:615.5px;top:589px;color:#aeb3c2">7</div>
<div class="cl" style="left:615.5px;top:633px;color:#aeb3c2">8</div>
<div class="cl" style="left:615.5px;top:677px;color:#aeb3c2">9</div>
<div class="cl" style="left:599.9px;top:721px;color:#aeb3c2">10</div>
<div class="cl" style="left:599.9px;top:809px;color:#aeb3c2">11</div>
<div class="cl" style="left:599.9px;top:853px;color:#aeb3c2">12</div>
<div class="cl" style="left:599.9px;top:897px;color:#aeb3c2">13</div>
<div class="cl" style="left:709px;top:237px"><span class="cm">-- auto-generated definition</span></div>
<div class="cl" style="left:709px;top:281px"><span class="kw">CREATE FUNCTION</span> <span class="fn">film_not_in_stock</span>(p_film_id</div>
<svg style="left:1390.0px;top:296px;" width="20" height="20" viewBox="0 0 20 20"><path d="M10.2 6.7 Q12.5 4.8 14.5 6.2 Q16 8 13.5 10.5 L7.2 16" fill="none" stroke="#080808" stroke-width="1.7" stroke-linecap="round"/><path d="M5.6 12.2 L5.8 17.4 L11 17.6 Z" fill="#080808" stroke="#080808" stroke-width="0.6" stroke-linejoin="round"/></svg>
<div class="cl" style="left:724px;top:325px"><span class="kw">integer</span>, p_store_id <span class="kw">integer</span>, <span class="kw">OUT</span> p_film_count</div>
<svg style="left:704px;top:340px;" width="20" height="20" viewBox="0 0 20 20"><path d="M11 7.5 Q9 4.6 6.6 6 Q5 8 7 10 L13.5 16" fill="none" stroke="#080808" stroke-width="1.7" stroke-linecap="round"/><path d="M15.9 11.8 L15.9 17.9 L9.8 17.9 Z" fill="#080808" stroke="#080808" stroke-width="0.6" stroke-linejoin="round"/></svg>
<svg style="left:1436.1000000000001px;top:340px;" width="20" height="20" viewBox="0 0 20 20"><path d="M10.2 6.7 Q12.5 4.8 14.5 6.2 Q16 8 13.5 10.5 L7.2 16" fill="none" stroke="#080808" stroke-width="1.7" stroke-linecap="round"/><path d="M5.6 12.2 L5.8 17.4 L11 17.6 Z" fill="#080808" stroke="#080808" stroke-width="0.6" stroke-linejoin="round"/></svg>
<div class="cl" style="left:724px;top:369px"><span class="kw">integer</span>) <span class="kw">RETURNS SETOF integer</span></div>
<svg style="left:704px;top:384px;" width="20" height="20" viewBox="0 0 20 20"><path d="M11 7.5 Q9 4.6 6.6 6 Q5 8 7 10 L13.5 16" fill="none" stroke="#080808" stroke-width="1.7" stroke-linecap="round"/><path d="M15.9 11.8 L15.9 17.9 L9.8 17.9 Z" fill="#080808" stroke="#080808" stroke-width="0.6" stroke-linejoin="round"/></svg>
<div class="cl" style="left:709px;top:413px">    <span class="kw">LANGUAGE</span> sql</div>
<div class="cl" style="left:709px;top:457px"><span class="kw">AS</span></div>
<div class="cl" style="left:709px;top:501px"><span class="gr">$$</span></div>
<div class="cl" style="left:709px;top:545px">    <span class="kw">SELECT</span> <span class="id">inventory_id</span></div>
<div class="cl" style="left:709px;top:589px">    <span class="kw">FROM</span> inventory</div>
<div class="cl" style="left:709px;top:633px">    <span class="kw">WHERE</span> <span class="id">film_id</span> = $1</div>
<div class="cl" style="left:709px;top:677px">    <span class="kw">AND</span> <span class="id">store_id</span> = $2</div>
<div class="cl" style="left:709px;top:721px">    <span class="kw">AND NOT</span> <span class="fn">inventory_in_stock</span></div>
<div style="position:absolute;left:808px;top:771px;width:180px;height:29px;border-radius:6px;background:#f2f2f3"></div>
<div class="t" style="left:818.921875px;top:770.1px;font-size:24px;line-height:29px;height:29px;color:#808081;font-weight:normal;">p_inventory_id</div>
<div class="cl" style="left:802px;top:765px">(</div>
<div class="cl" style="left:991px;top:765px"><span class="id">inventory_id</span>);</div>
<div class="cl" style="left:709px;top:809px"><span class="gr">$$</span>;</div>
<div class="cl" style="left:709px;top:897px"><span class="kw">ALTER FUNCTION</span> <span class="fn">film_not_in_stock</span>(<span class="kw">integer</span>, <span class="kw">integer</span>,</div>
<div class="cl" style="left:802px;top:941px"><span class="kw">integer</span>) <span class="kw">OWNER TO</span> guest;</div>
<svg style="left:720px;top:330px;" width="32" height="36" viewBox="0 0 32 36"><circle cx="15.8" cy="14.6" r="9.6" fill="#ffaa10"/><path d="M7.8 19 L23.8 19 L21 26 L10.9 26 Z" fill="#ffaa10"/><path d="M11 29 L20.6 29" stroke="#5e6270" stroke-width="1.9"/><path d="M12 32 L19.8 32 Q18.5 34 15.9 34 Q13.3 34 12 32 Z" fill="#5e6270"/></svg>
<div style="position:absolute;left:1494px;top:234px;width:41px;height:48px;border-radius:0 0 10px 10px;background:#fff"></div>
<svg style="left:1500px;top:250px;" width="30" height="22" viewBox="0 0 30 22"><path d="M4 11 L10.5 17.5 L24 4" fill="none" stroke="#55a76a" stroke-width="4" stroke-linecap="round" stroke-linejoin="round"/></svg>
<div style="position:absolute;left:1520px;top:290px;width:14px;height:504px;border-radius:7px;background:#c9c9cb"></div>
<div style="position:absolute;left:1512px;top:314px;width:28px;height:4px;background:rgba(180,100,240,0.6)"></div>
<div style="position:absolute;left:1512px;top:728px;width:28px;height:4px;background:rgba(180,100,240,0.6)"></div>
<div style="position:absolute;left:0;top:1044px;width:1540px;height:60px;background:#f7f8fa;border-top:2px solid #ebecf0"></div>
<div style="position:absolute;left:148px;top:1046px;width:420px;height:5px;border-radius:3px;background:#6f737a"></div>
<div class="t" style="left:22px;top:1057.1px;font-size:27px;line-height:32px;height:32px;color:#6c707e;font-weight:normal;">PostgreSQL</div>
<svg style="left:187.5px;top:1063.5px;" width="12" height="19" viewBox="0 0 12 19"><path d="M2 2 L10 9.5 L2 17" fill="none" stroke="#9a9da6" stroke-width="2" stroke-linecap="round" stroke-linejoin="round"/></svg>
<div class="t" style="left:218px;top:1057.1px;font-size:27px;line-height:32px;height:32px;color:#6c707e;font-weight:normal;">guest</div>
<svg style="left:306.5px;top:1063.5px;" width="12" height="19" viewBox="0 0 12 19"><path d="M2 2 L10 9.5 L2 17" fill="none" stroke="#9a9da6" stroke-width="2" stroke-linecap="round" stroke-linejoin="round"/></svg>
<div class="t" style="left:337px;top:1057.1px;font-size:27px;line-height:32px;height:32px;color:#6c707e;font-weight:normal;">public</div>
<svg style="left:427.5px;top:1063.5px;" width="12" height="19" viewBox="0 0 12 19"><path d="M2 2 L10 9.5 L2 17" fill="none" stroke="#9a9da6" stroke-width="2" stroke-linecap="round" stroke-linejoin="round"/></svg>
<div style="position:absolute;left:450px;top:1052px;width:116px;height:42px;border-radius:6px;background:#e6e7eb"></div>
<div class="t" style="left:458px;top:1057.1px;font-size:27px;line-height:32px;height:32px;color:#000;font-weight:normal;">routines</div>
<svg style="left:575.5px;top:1063.5px;" width="12" height="19" viewBox="0 0 12 19"><path d="M2 2 L10 9.5 L2 17" fill="none" stroke="#9a9da6" stroke-width="2" stroke-linecap="round" stroke-linejoin="round"/></svg>
<svg style="left:608px;top:1059px;" width="28" height="28" viewBox="0 0 28 28"><circle cx="14" cy="14" r="12.8" fill="#e7effd" stroke="#3574f0" stroke-width="2.2"/><path d="M11.9 20 L11.9 9.2 L18.8 9.2 M11.9 15 L17.7 15" fill="none" stroke="#3574f0" stroke-width="1.9"/></svg>
<div class="t" style="left:646px;top:1053px;width:132px;height:40px;overflow:hidden;-webkit-mask-image:linear-gradient(90deg,#000 80%,transparent 100%)"><div class="t" style="left:0;top:0;font-size:27px;line-height:40px;color:#6c707e">film_not_in_stock</div></div>
<div class="t" style="left:883px;top:1057.1px;font-size:27px;line-height:32px;height:32px;color:#6c707e;font-weight:normal;">2:17</div>
<div class="t" style="left:964px;top:1057.1px;font-size:27px;line-height:32px;height:32px;color:#6c707e;font-weight:normal;">LF</div>
<div class="t" style="left:1027px;top:1057.1px;font-size:27px;line-height:32px;height:32px;color:#6c707e;font-weight:normal;">UTF-8</div>
<div class="t" style="left:1139px;top:1057.1px;font-size:27px;line-height:32px;height:32px;color:#6c707e;font-weight:normal;">4 spaces</div>
<div class="t" style="left:1317px;top:1057.1px;font-size:27px;line-height:32px;height:32px;color:#6c707e;font-weight:normal;">tests</div>
<svg style="left:1282px;top:1059px;" width="26" height="30" viewBox="0 0 26 30"><g fill="none" stroke="#6c707e" stroke-width="2"><circle cx="7" cy="5.6" r="4"/><circle cx="19" cy="9.8" r="4"/><path d="M7 9.6 L7 27.5 M19 13.8 L19 15.5 Q19 19.5 15 19.5 L7 19.5"/></g></svg>
<svg style="left:1412px;top:1058px;" width="32" height="30" viewBox="0 0 32 30"><g fill="none" stroke="#6c707e" stroke-width="2" stroke-linejoin="round"><rect x="3.8" y="13.4" width="17.5" height="14.3" rx="3"/><path d="M17.3 13.4 L17.3 9.6 Q17.3 5.3 22.3 5.3 Q27.1 5.3 27.1 9.6 L27.1 13.6"/><path d="M12 17.5 L12 22.2"/></g></svg>
<svg style="left:1472px;top:1056px;" width="32" height="36" viewBox="0 0 32 36"><g fill="none" stroke="#6c707e" stroke-width="2" stroke-linejoin="round"><path d="M4.5 26.7 L8.5 18.2 L8.5 13 Q8.5 5.2 16 5.2 Q23.5 5.2 23.5 13 L23.5 18.2 L27.5 26.7 Z"/></g><path d="M13 30 L19 30 Q18 33 16 33 Q14 33 13 30Z" fill="#6c707e"/></svg>
<div style="position:absolute;left:449px;top:603px;width:423px;height:454px;border-radius:14px;background:#fff;border:1.2px solid #222;box-shadow:0 4px 24px rgba(0,0,0,0.2)"></div>
<div style="position:absolute;left:459px;top:710px;width:402px;height:48px;border-radius:8px;background:#d4e2ff"></div>
<svg style="left:465px;top:624px;" width="28" height="28" viewBox="0 0 28 28"><circle cx="14" cy="14" r="12.8" fill="#e7effd" stroke="#3574f0" stroke-width="2.2"/><path d="M11.9 20 L11.9 9.2 L18.8 9.2 M11.9 15 L17.7 15" fill="none" stroke="#3574f0" stroke-width="1.9"/></svg>
<div class="t" style="left:505px;top:623.1px;font-size:27px;line-height:32px;height:32px;color:#000;font-weight:normal;">_group_concat</div>
<svg style="left:465px;top:672px;" width="28" height="28" viewBox="0 0 28 28"><circle cx="14" cy="14" r="12.8" fill="#e7effd" stroke="#3574f0" stroke-width="2.2"/><path d="M11.9 20 L11.9 9.2 L18.8 9.2 M11.9 15 L17.7 15" fill="none" stroke="#3574f0" stroke-width="1.9"/></svg>
<div class="t" style="left:505px;top:671.1px;font-size:27px;line-height:32px;height:32px;color:#000;font-weight:normal;">film_in_stock</div>
<svg style="left:465px;top:720px;" width="28" height="28" viewBox="0 0 28 28"><circle cx="14" cy="14" r="12.8" fill="#e7effd" stroke="#3574f0" stroke-width="2.2"/><path d="M11.9 20 L11.9 9.2 L18.8 9.2 M11.9 15 L17.7 15" fill="none" stroke="#3574f0" stroke-width="1.9"/></svg>
<div class="t" style="left:505px;top:719.1px;font-size:27px;line-height:32px;height:32px;color:#000;font-weight:normal;">film_not_in_stock</div>
<svg style="left:465px;top:768px;" width="28" height="28" viewBox="0 0 28 28"><circle cx="14" cy="14" r="12.8" fill="#e7effd" stroke="#3574f0" stroke-width="2.2"/><path d="M11.9 20 L11.9 9.2 L18.8 9.2 M11.9 15 L17.7 15" fill="none" stroke="#3574f0" stroke-width="1.9"/></svg>
<div class="t" style="left:505px;top:767.1px;font-size:27px;line-height:32px;height:32px;color:#000;font-weight:normal;">get_customer_balance</div>
<svg style="left:465px;top:816px;" width="28" height="28" viewBox="0 0 28 28"><circle cx="14" cy="14" r="12.8" fill="#e7effd" stroke="#3574f0" stroke-width="2.2"/><path d="M11.9 20 L11.9 9.2 L18.8 9.2 M11.9 15 L17.7 15" fill="none" stroke="#3574f0" stroke-width="1.9"/></svg>
<div class="t" style="left:505px;top:815.1px;font-size:27px;line-height:32px;height:32px;color:#000;font-weight:normal;">inventory_held_by_customer</div>
<svg style="left:465px;top:864px;" width="28" height="28" viewBox="0 0 28 28"><circle cx="14" cy="14" r="12.8" fill="#e7effd" stroke="#3574f0" stroke-width="2.2"/><path d="M11.9 20 L11.9 9.2 L18.8 9.2 M11.9 15 L17.7 15" fill="none" stroke="#3574f0" stroke-width="1.9"/></svg>
<div class="t" style="left:505px;top:863.1px;font-size:27px;line-height:32px;height:32px;color:#000;font-weight:normal;">inventory_in_stock</div>
<svg style="left:465px;top:912px;" width="28" height="28" viewBox="0 0 28 28"><circle cx="14" cy="14" r="12.8" fill="#e7effd" stroke="#3574f0" stroke-width="2.2"/><path d="M11.9 20 L11.9 9.2 L18.8 9.2 M11.9 15 L17.7 15" fill="none" stroke="#3574f0" stroke-width="1.9"/></svg>
<div class="t" style="left:505px;top:911.1px;font-size:27px;line-height:32px;height:32px;color:#000;font-weight:normal;">last_day</div>
<svg style="left:465px;top:960px;" width="28" height="28" viewBox="0 0 28 28"><circle cx="14" cy="14" r="12.8" fill="#e7effd" stroke="#3574f0" stroke-width="2.2"/><path d="M11.9 20 L11.9 9.2 L18.8 9.2 M11.9 15 L17.7 15" fill="none" stroke="#3574f0" stroke-width="1.9"/></svg>
<div class="t" style="left:505px;top:959.1px;font-size:27px;line-height:32px;height:32px;color:#000;font-weight:normal;">last_updated</div>
<svg style="left:465px;top:1008px;" width="28" height="28" viewBox="0 0 28 28"><circle cx="14" cy="14" r="12.8" fill="#e7effd" stroke="#3574f0" stroke-width="2.2"/><path d="M11.9 20 L11.9 9.2 L18.8 9.2 M11.9 15 L17.7 15" fill="none" stroke="#3574f0" stroke-width="1.9"/></svg>
<div class="t" style="left:505px;top:1007.1px;font-size:27px;line-height:32px;height:32px;color:#000;font-weight:normal;">rewards_report</div>
</div></body></html>
